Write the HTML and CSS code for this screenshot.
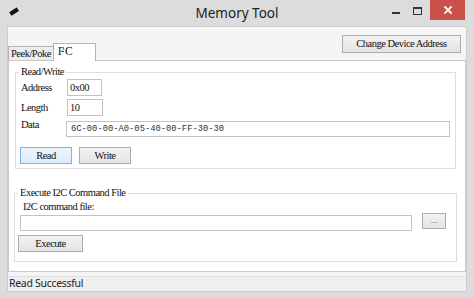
FILE: index.html
```html
<!DOCTYPE html>
<html>
<head>
<meta charset="utf-8">
<title>Memory Tool</title>
<link rel="stylesheet" href="styles.css">
</head>
<body>
<div class="window">
  <header class="titlebar">
    <div class="tb-left">
      <svg class="app-icon" width="10" height="9" viewBox="0 0 10 9"><rect x="0.5" y="2.5" width="9" height="4.2" rx="0.6" transform="rotate(-33 5 4.5)" fill="#111"/></svg>
    </div>
    <div class="tb-title">Memory Tool</div>
    <div class="tb-right">
      <span class="btn-min"></span>
      <span class="btn-max"></span>
      <span class="btn-close"><svg width="8" height="8" viewBox="0 0 8 8"><path d="M1 1L7 7M7 1L1 7" stroke="#fff" stroke-width="1.8" stroke-linecap="square"/></svg></span>
    </div>
  </header>
  <div class="client">
    <div class="tabrow">
      <div class="tabs">
        <div class="tab">Peek/Poke</div>
        <div class="tab active">I² C</div>
      </div>
      <div class="btn btn-change">Change Device Address</div>
    </div>
    <div class="panel">
      <fieldset class="group group-rw">
        <legend>Read/Write</legend>
        <div class="row row-addr">
          <span class="lbl">Address</span>
          <div class="textbox tb-addr">0x00</div>
        </div>
        <div class="row row-len">
          <span class="lbl">Length</span>
          <div class="textbox tb-len">10</div>
        </div>
        <div class="row row-data">
          <span class="lbl lbl-data">Data</span>
          <div class="textbox tb-data">6C-00-00-A0-05-40-00-FF-30-30</div>
        </div>
        <div class="row row-btns">
          <div class="btn btn-read">Read</div>
          <div class="btn btn-write">Write</div>
        </div>
      </fieldset>
      <fieldset class="group group-exec">
        <legend>Execute I2C Command File</legend>
        <div class="lbl lbl-file">I2C command file:</div>
        <div class="row row-file">
          <div class="textbox tb-file"></div>
          <div class="btn btn-browse">...</div>
        </div>
        <div class="row row-exec">
          <div class="btn btn-exec">Execute</div>
        </div>
      </fieldset>
    </div>
    <div class="statusbar">Read Successful</div>
  </div>
</div>
</body>
</html>
```
FILE: styles.css
```css
* { box-sizing: border-box; }
html, body { margin: 0; padding: 0; }
body {
  width: 474px;
  height: 298px;
  overflow: hidden;
  background: #dcdcdc;
  font-family: "Liberation Serif", serif;
  font-size: 10.5px;
  letter-spacing: -0.5px;
  color: #111;
}
.window {
  display: flex;
  flex-direction: column;
  height: 298px;
  background: #dcdcdc;
}

/* title bar */
.titlebar {
  height: 26px;
  display: grid;
  grid-template-columns: 1fr auto 1fr;
  align-items: start;
}
.app-icon { display: block; margin: 7px 0 0 9px; }
.tb-title {
  font-family: "Noto Sans", sans-serif;
  font-size: 13.5px;
  letter-spacing: 0;
  line-height: 26px;
  color: #222;
}
.tb-right {
  display: flex;
  justify-content: flex-end;
  align-items: flex-start;
  padding-right: 9px;
}
.btn-min { width: 8px; height: 2px; background: #333; margin-top: 12px; }
.btn-max {
  width: 9px; height: 8px;
  border: 1px solid #333; border-top-width: 2px;
  margin: 7px 8px 0 13px;
}
.btn-close {
  width: 35px; height: 20px;
  background: #c9504b;
  display: flex; align-items: center; justify-content: center;
}
.btn-close svg { display: block; }

/* client area */
.client {
  margin: 0 7px 6px;
  height: 266px;
  border: 1px solid #cdcdcd;
  background: #f5f5f5;
  padding-top: 8px;
  display: flex;
  flex-direction: column;
}
.tabrow {
  height: 25px;
  display: flex;
  align-items: flex-end;
}
.tabs { display: flex; align-items: flex-end; }
.tab {
  height: 14px;
  padding: 0 2px;
  border: 1px solid #b4b4b4;
  border-bottom: none;
  background: #ededed;
  line-height: 13px;
  white-space: nowrap;
}
.tab.active {
  position: relative;
  z-index: 1;
  height: 18px;
  width: 43px;
  margin-left: -1px;
  margin-bottom: -1px;
  padding: 0 4px;
  background: #fff;
  line-height: 15px;
  font-size: 11.5px;
  letter-spacing: -1px;
}

.btn {
  border: 1px solid #adadad;
  background: linear-gradient(#f2f2f2, #e4e4e4);
  text-align: center;
  white-space: nowrap;
}
.btn-change {
  align-self: flex-start;
  margin-left: auto;
  margin-right: 5px;
  width: 119px;
  height: 18px;
  line-height: 16px;
}

.panel {
  height: 212px;
  border: 1px solid #cacaca;
  background: #fff;
  display: flex;
  flex-direction: column;
}

.group {
  border: 1px solid #dedede;
  margin: 0;
  padding: 0;
  min-width: 0;
}
.group legend {
  margin-left: 3px;
  padding: 0 2px;
  line-height: 12px;
  height: 12px;
}
.group-rw { margin: 5px 9px 0 6px; padding-bottom: 4px; }
.group-exec { margin: 18px 8px 0 5px; padding-bottom: 9px; }

.row { display: flex; align-items: center; }
.lbl { line-height: 12px; white-space: nowrap; }
.row .lbl { width: 46px; margin-left: 5px; }
.row-addr { margin-top: 1px; height: 17px; }
.row-len { margin-top: 3px; height: 17px; }
.row-data { margin-top: 5px; height: 16px; align-items: flex-start; }
.row .lbl-data { width: 45px; margin-top: -2px; }

.textbox {
  border: 1px solid #c2c2c2;
  background: #fff;
  padding-left: 2px;
  white-space: nowrap;
  overflow: hidden;
}
.tb-addr { width: 35px; height: 17px; line-height: 15px; }
.tb-len { width: 36px; height: 17px; line-height: 15px; }
.tb-data {
  width: 384px; height: 16px; line-height: 14px;
  padding-left: 4px;
  font-family: "Liberation Mono", monospace;
  font-size: 8.8px;
  letter-spacing: 0;
  color: #333;
}

.row-btns { margin-top: 10px; height: 17px; }
.btn-read {
  margin-left: 4px; width: 52px; height: 17px; line-height: 15px;
  border-color: #7fb2e5;
  background: linear-gradient(#edf5fd, #dcebfb);
}
.btn-write { margin-left: 7px; width: 52px; height: 17px; line-height: 15px; }

.lbl-file { margin: 2px 0 0 8px; }
.row-file { height: 18px; align-items: flex-start; }
.tb-file { margin: 2px 0 0 5px; width: 392px; height: 16px; }
.btn-browse {
  margin-left: 10px; width: 24px; height: 16px; line-height: 12px;
  font-size: 9px; letter-spacing: 0; color: #555;
}
.row-exec { margin-top: 4px; height: 17px; }
.btn-exec { margin-left: 3px; width: 65px; height: 17px; line-height: 15px; }

.statusbar {
  margin-top: 4px;
  height: 15px;
  border-top: 1px solid #dedede;
  background: #efefef;
  padding-left: 1px;
  font-family: "Noto Sans", sans-serif;
  font-size: 10.5px;
  letter-spacing: -0.3px;
  line-height: 13px;
  color: #222;
}
```
